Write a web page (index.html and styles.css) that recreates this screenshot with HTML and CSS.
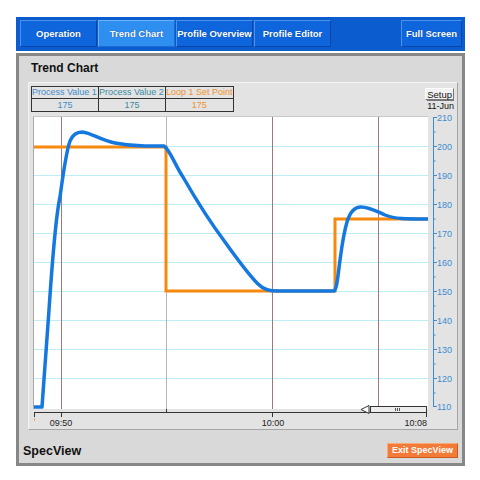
FILE: index.html
```html
<!DOCTYPE html>
<html lang="en">
<head>
    <meta charset="UTF-8">
    <meta name="viewport" content="width=device-width, initial-scale=1.0">
    <title>SpecView - Trend Chart</title>
    <link rel="stylesheet" href="styles.css">
</head>
<body>
    <div class="app">
        <div class="tabs">
            <div class="tab">Operation</div>
            <div class="tab active">Trend Chart</div>
            <div class="tab">Profile Overview</div>
            <div class="tab">Profile Editor</div>
            <div class="tab full">Full Screen</div>
        </div>

        <div class="panel">
            <div class="panel-title">Trend Chart</div>

            <div class="chart-frame">
                <div class="chart-head">
                    <table class="legend">
                        <tr>
                            <td class="pv1">Process Value 1</td>
                            <td class="pv2">Process Value 2</td>
                            <td class="sp">Loop 1 Set Point</td>
                        </tr>
                        <tr>
                            <td class="pv1 val">175</td>
                            <td class="pv2 val">175</td>
                            <td class="sp val">175</td>
                        </tr>
                    </table>
                    <div class="head-right">
                        <div class="setup">Setup</div>
                        <div class="date">11-Jun</div>
                    </div>
                </div>

                <svg class="plot" width="428" height="317" viewBox="29 112 428 317">
                    <rect x="33" y="116" width="395" height="293" fill="#fff"/>
                    <line x1="33.5" y1="116" x2="33.5" y2="409" stroke="#a8a8a8"/>
                    <line x1="33" y1="116.5" x2="428" y2="116.5" stroke="#c8c8c8"/>

                    <g stroke="#bdeef6" stroke-width="1">
                        <line x1="34" y1="146.5" x2="428" y2="146.5"/>
                        <line x1="34" y1="175.5" x2="428" y2="175.5"/>
                        <line x1="34" y1="204.5" x2="428" y2="204.5"/>
                        <line x1="34" y1="233.5" x2="428" y2="233.5"/>
                        <line x1="34" y1="262.5" x2="428" y2="262.5"/>
                        <line x1="34" y1="291.5" x2="428" y2="291.5"/>
                        <line x1="34" y1="320.5" x2="428" y2="320.5"/>
                        <line x1="34" y1="349.5" x2="428" y2="349.5"/>
                        <line x1="34" y1="378.5" x2="428" y2="378.5"/>
                    </g>

                    <g stroke-width="1">
                        <line x1="61.5" y1="117" x2="61.5" y2="409" stroke="#9a7a7a"/>
                        <line x1="166.5" y1="117" x2="166.5" y2="409" stroke="#b4b4b4"/>
                        <line x1="272.5" y1="117" x2="272.5" y2="409" stroke="#9a7a7a"/>
                        <line x1="378.5" y1="117" x2="378.5" y2="409" stroke="#9a7a7a"/>
                    </g>

                    <path d="M34 147 L166 147 L166 291 L335 291 L335 219 L428 219"
                          fill="none" stroke="#f7890e" stroke-width="3"/>

                    <path d="M34 407 L42 407 L49 310 C53 250 56 215 60 197 C63 175 66 152 70 141 C73 134 77 132 82 132 C92 133 100 140 115 143 C125 145 135 146 145 146 L164 146 C170 150 175 165 183 177 C195 198 210 222 225 242 C240 263 250 276 258 284 C264 290 270 291 278 291 L334 291 C337 289 338 275 340 260 C342 245 344 232 347 222 C350 212 354 207 361 207 C369 207 376 211 385 215 C395 219 405 219 428 219"
                          fill="none" stroke="#1478e0" stroke-width="3.5" stroke-linejoin="round"/>

                    <g stroke="#3c8cd0" stroke-width="1">
                        <line x1="433.5" y1="117" x2="433.5" y2="407"/>
                        <line x1="433" y1="117.5" x2="437" y2="117.5"/>
                        <line x1="433" y1="146.5" x2="437" y2="146.5"/>
                        <line x1="433" y1="175.5" x2="437" y2="175.5"/>
                        <line x1="433" y1="204.5" x2="437" y2="204.5"/>
                        <line x1="433" y1="233.5" x2="437" y2="233.5"/>
                        <line x1="433" y1="262.5" x2="437" y2="262.5"/>
                        <line x1="433" y1="291.5" x2="437" y2="291.5"/>
                        <line x1="433" y1="320.5" x2="437" y2="320.5"/>
                        <line x1="433" y1="349.5" x2="437" y2="349.5"/>
                        <line x1="433" y1="378.5" x2="437" y2="378.5"/>
                        <line x1="433" y1="406.5" x2="437" y2="406.5"/>
                        <line x1="433" y1="132" x2="435.5" y2="132"/>
                        <line x1="433" y1="161" x2="435.5" y2="161"/>
                        <line x1="433" y1="190" x2="435.5" y2="190"/>
                        <line x1="433" y1="219" x2="435.5" y2="219"/>
                        <line x1="433" y1="248" x2="435.5" y2="248"/>
                        <line x1="433" y1="277" x2="435.5" y2="277"/>
                        <line x1="433" y1="306" x2="435.5" y2="306"/>
                        <line x1="433" y1="335" x2="435.5" y2="335"/>
                        <line x1="433" y1="364" x2="435.5" y2="364"/>
                        <line x1="433" y1="393" x2="435.5" y2="393"/>
                    </g>
                    <g class="ylabels">
                        <text x="437" y="121">210</text>
                        <text x="437" y="150">200</text>
                        <text x="437" y="179">190</text>
                        <text x="437" y="208">180</text>
                        <text x="437" y="237">170</text>
                        <text x="437" y="266">160</text>
                        <text x="437" y="295">150</text>
                        <text x="437" y="324">140</text>
                        <text x="437" y="353">130</text>
                        <text x="437" y="382">120</text>
                        <text x="437" y="410">110</text>
                    </g>

                    <g stroke="#333" stroke-width="1">
                        <line x1="34" y1="412.5" x2="427" y2="412.5"/>
                        <line x1="34.5" y1="412" x2="34.5" y2="417"/>
                        <line x1="61.5" y1="412" x2="61.5" y2="417"/>
                        <line x1="166.5" y1="409" x2="166.5" y2="413"/>
                        <line x1="272.5" y1="412" x2="272.5" y2="417"/>
                        <line x1="426.5" y1="412" x2="426.5" y2="417"/>
                    </g>
                    <line x1="34.5" y1="418" x2="34.5" y2="421" stroke="#f0a060"/>
                    <g class="xlabels">
                        <text x="61" y="426" text-anchor="middle">09:50</text>
                        <text x="273" y="426" text-anchor="middle">10:00</text>
                        <text x="427" y="426" text-anchor="end">10:08</text>
                    </g>

                    <polygon points="361,409.5 369,405.5 369,413.5" fill="#fff" stroke="#333"/>
                    <rect x="370.5" y="406.5" width="56" height="6" fill="#ececec" stroke="#333"/>
                    <g stroke="#555">
                        <line x1="395.5" y1="408" x2="395.5" y2="411"/>
                        <line x1="397.5" y1="408" x2="397.5" y2="411"/>
                        <line x1="399.5" y1="408" x2="399.5" y2="411"/>
                    </g>
                </svg>
            </div>

            <div class="footer">
                <div class="brand">SpecView</div>
                <div class="exit">Exit SpecView</div>
            </div>
        </div>
    </div>
</body>
</html>
```

FILE: styles.css
```css
body {
    margin: 0;
    padding: 0;
    background-color: #fff;
    font-family: "Liberation Sans", Arial, sans-serif;
}
.app {
    width: 449px;
    margin: 17px 0 0 16px;
}
.tabs {
    display: flex;
    gap: 1px;
    height: 34px;
    padding: 3px 3px 4px 4px;
    box-sizing: border-box;
    background-color: #0a5ccf;
}
.tab {
    width: 77px;
    height: 27px;
    box-sizing: border-box;
    display: flex;
    align-items: center;
    justify-content: center;
    background-color: #0f66dc;
    border: 1px solid;
    border-color: #4b93ea #0845a8 #0845a8 #4b93ea;
    color: #fff;
    font-size: 9.5px;
    font-weight: bold;
    white-space: nowrap;
    text-shadow: 0 0 1px #003a90;
}
.tab.active {
    background-color: #2f8ff0;
    border-color: #6cb0f6 #1a6cd0 #1a6cd0 #6cb0f6;
}
.tab.full {
    width: 61px;
    margin-left: auto;
}
.panel {
    margin-top: 2px;
    height: 413px;
    box-sizing: border-box;
    border: 3px solid #878787;
    background-color: #d9d9d9;
}
.panel-title {
    height: 26px;
    box-sizing: border-box;
    padding: 5px 0 0 12px;
    font-size: 12px;
    line-height: 14px;
    font-weight: bold;
    color: #111;
}
.chart-frame {
    width: 430px;
    height: 348px;
    margin-left: 9px;
    box-sizing: border-box;
    border: 1px solid;
    border-color: #f4f4f4 #a6a6a6 #a6a6a6 #f4f4f4;
    background-color: #e3e3e3;
}
.chart-head {
    display: flex;
    justify-content: space-between;
    height: 29px;
}
.legend {
    border-collapse: collapse;
    margin: 3px 0 0 2px;
    height: 25px;
    font-size: 9px;
}
.legend td {
    width: 66px;
    padding: 0;
    border: 1px solid #333;
    line-height: 11px;
    white-space: nowrap;
    overflow: hidden;
}
.legend td.val {
    text-align: center;
    line-height: 12px;
}
.pv1 {
    color: #3f8cc8;
}
.pv2 {
    color: #3b8ba0;
}
.sp {
    color: #f0902e;
}
.head-right {
    margin: 5px 3px 0 0;
    display: flex;
    flex-direction: column;
    align-items: flex-end;
}
.setup {
    height: 12px;
    padding: 0 1px;
    box-sizing: border-box;
    font-size: 9.5px;
    line-height: 11px;
    color: #111;
    background-color: #f2f2f2;
    border: 1px solid;
    border-color: #fff #777 #777 #fff;
}
.date {
    font-size: 9px;
    line-height: 10px;
    color: #111;
    border-top: 1px solid #777;
}
.plot {
    display: block;
}
.ylabels text {
    font-size: 9px;
    fill: #3c8cd0;
}
.xlabels text {
    font-size: 9px;
    fill: #222;
}
.footer {
    display: flex;
    justify-content: space-between;
    align-items: center;
    height: 33px;
    box-sizing: border-box;
    padding: 8px 4px 0 4px;
}
.brand {
    font-size: 12.5px;
    font-weight: bold;
    color: #111;
}
.exit {
    width: 71px;
    height: 15px;
    box-sizing: border-box;
    background-color: #f47a38;
    border: 1px solid;
    border-color: #f9a878 #c85a20 #c85a20 #f9a878;
    color: #fff;
    font-size: 9px;
    font-weight: bold;
    line-height: 13px;
    text-align: center;
    white-space: nowrap;
}
```
